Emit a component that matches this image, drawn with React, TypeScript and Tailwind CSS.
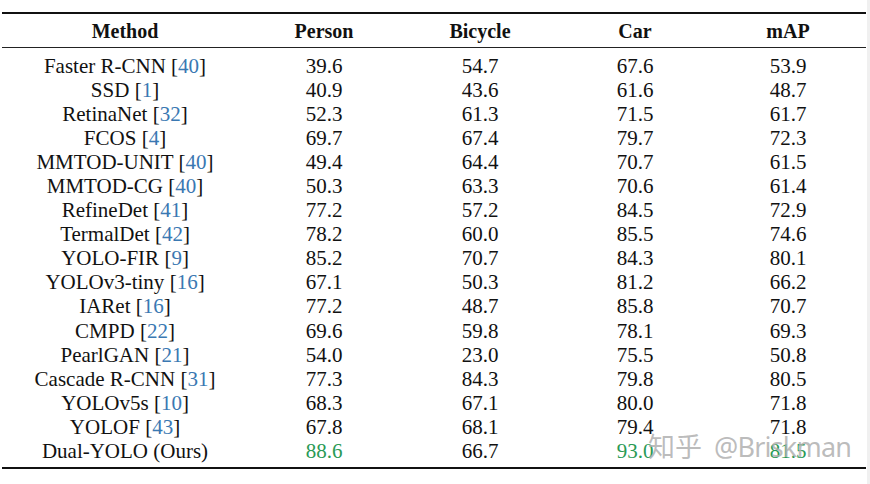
import React from 'react';

type Row = {
  name: string;
  ref?: string;
  person: string;
  bicycle: string;
  car: string;
  map: string;
  ours?: boolean;
};

const rows: Row[] = [
  { name: 'Faster R-CNN', ref: '40', person: '39.6', bicycle: '54.7', car: '67.6', map: '53.9' },
  { name: 'SSD', ref: '1', person: '40.9', bicycle: '43.6', car: '61.6', map: '48.7' },
  { name: 'RetinaNet', ref: '32', person: '52.3', bicycle: '61.3', car: '71.5', map: '61.7' },
  { name: 'FCOS', ref: '4', person: '69.7', bicycle: '67.4', car: '79.7', map: '72.3' },
  { name: 'MMTOD-UNIT', ref: '40', person: '49.4', bicycle: '64.4', car: '70.7', map: '61.5' },
  { name: 'MMTOD-CG', ref: '40', person: '50.3', bicycle: '63.3', car: '70.6', map: '61.4' },
  { name: 'RefineDet', ref: '41', person: '77.2', bicycle: '57.2', car: '84.5', map: '72.9' },
  { name: 'TermalDet', ref: '42', person: '78.2', bicycle: '60.0', car: '85.5', map: '74.6' },
  { name: 'YOLO-FIR', ref: '9', person: '85.2', bicycle: '70.7', car: '84.3', map: '80.1' },
  { name: 'YOLOv3-tiny', ref: '16', person: '67.1', bicycle: '50.3', car: '81.2', map: '66.2' },
  { name: 'IARet', ref: '16', person: '77.2', bicycle: '48.7', car: '85.8', map: '70.7' },
  { name: 'CMPD', ref: '22', person: '69.6', bicycle: '59.8', car: '78.1', map: '69.3' },
  { name: 'PearlGAN', ref: '21', person: '54.0', bicycle: '23.0', car: '75.5', map: '50.8' },
  { name: 'Cascade R-CNN', ref: '31', person: '77.3', bicycle: '84.3', car: '79.8', map: '80.5' },
  { name: 'YOLOv5s', ref: '10', person: '68.3', bicycle: '67.1', car: '80.0', map: '71.8' },
  { name: 'YOLOF', ref: '43', person: '67.8', bicycle: '68.1', car: '79.4', map: '71.8' },
  { name: 'Dual-YOLO (Ours)', person: '88.6', bicycle: '66.7', car: '93.0', map: '81.5', ours: true },
];

const cols = 'grid grid-cols-[246px_152px_160px_150px_156px]';

export default function App() {
  return (
    <div className="relative w-[870px] h-[484px] bg-white overflow-hidden font-['Liberation_Serif',serif] text-[#111] text-[21px]">
      <div className="absolute right-0 top-0 h-full w-[3px] bg-[#f0f0f0]" />
      <div className="ml-[2px] mt-[12px] w-[864px] border-t-2 border-b-2 border-[#111]">
        {/* header */}
        <div className={`${cols} h-[34px] items-center border-b border-[#222] font-bold text-center text-[20px]`}>
          <div>Method</div>
          <div>Person</div>
          <div>Bicycle</div>
          <div>Car</div>
          <div>mAP</div>
        </div>
        {/* body */}
        <div className="pt-[6px] pb-[3px]">
          {rows.map((r) => (
            <div key={r.name} className={`${cols} h-[24.1px] items-center text-center leading-none`}>
              <div>
                {r.name}
                {r.ref && (
                  <>
                    {' '}[<span className="text-[#3a78b2]">{r.ref}</span>]
                  </>
                )}
              </div>
              <div className={r.ours ? 'text-[#2a9a55]' : ''}>{r.person}</div>
              <div>{r.bicycle}</div>
              <div className={r.ours ? 'text-[#2a9a55]' : ''}>{r.car}</div>
              <div className={r.ours ? 'text-[#2a9a55]' : ''}>{r.map}</div>
            </div>
          ))}
        </div>
      </div>
      {/* watermark */}
      <div className="absolute left-[648px] top-[433px] flex items-center gap-[12px] text-[27px] text-[#b0b0b0]/85 font-['Noto_Sans','Noto_Sans_CJK_SC',sans-serif] leading-none">
        <span>知乎</span>
        <span className="tracking-[-0.8px]">@Briskman</span>
      </div>
    </div>
  );
}
